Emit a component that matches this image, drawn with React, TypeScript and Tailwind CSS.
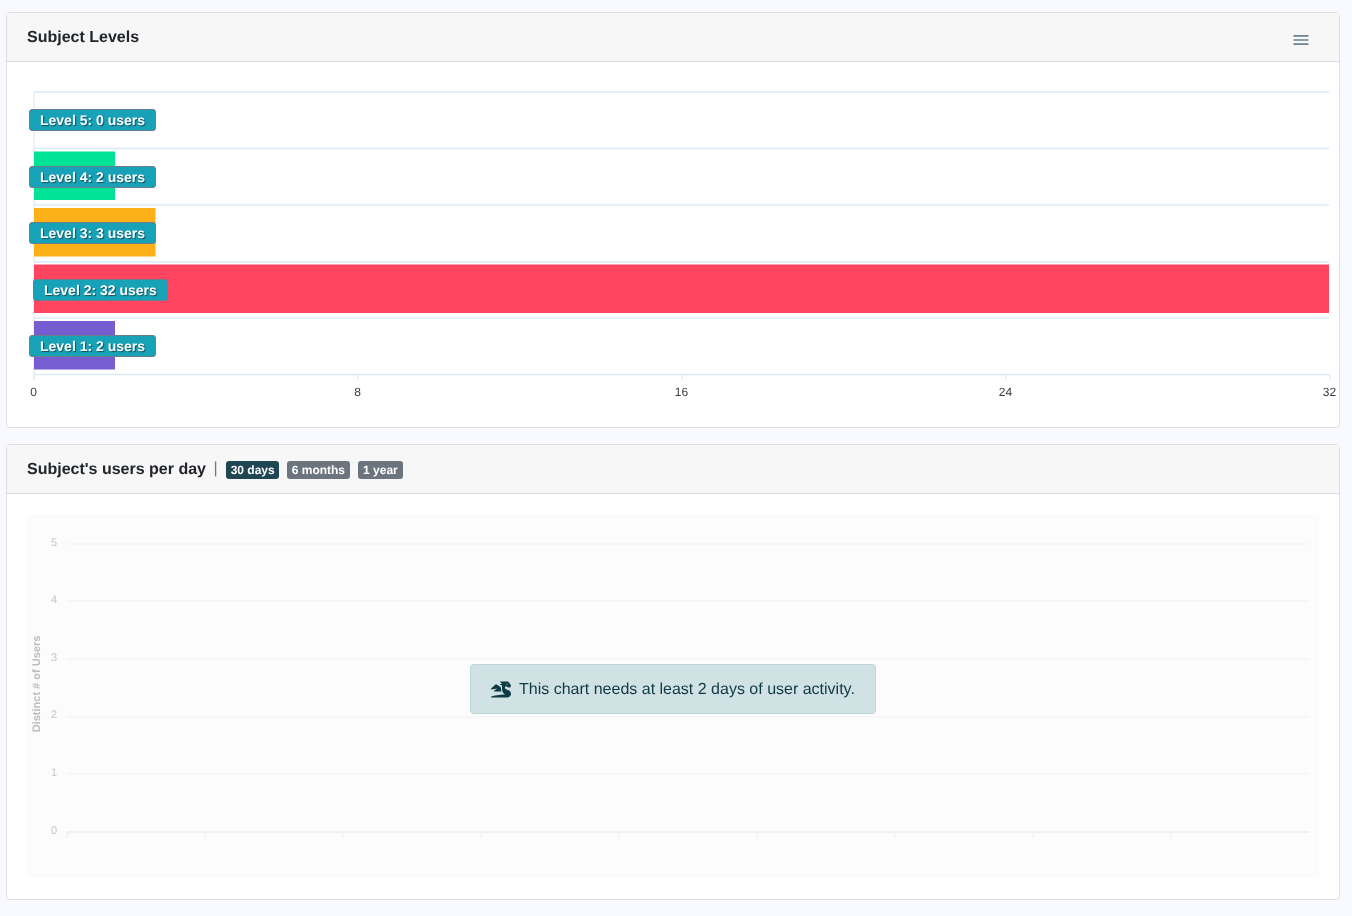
import { FaDragon } from "react-icons/fa";

const levelBars = [
  { y: 151.5, w: 81, fill: "#00e396" },
  { y: 208, w: 121.5, fill: "#feb019" },
  { y: 264.5, w: 1295, fill: "#ff4560" },
  { y: 321, w: 81, fill: "#775dd0" },
];

const levelLabels = [
  { text: "Level 5: 0 users", pos: "left-[22px] top-[47px] w-[126.5px]" },
  { text: "Level 4: 2 users", pos: "left-[22px] top-[103.5px] w-[126.5px]" },
  { text: "Level 3: 3 users", pos: "left-[22px] top-[160px] w-[126.5px]" },
  { text: "Level 2: 32 users", pos: "left-[26px] top-[217px] w-[135px]" },
  { text: "Level 1: 2 users", pos: "left-[22px] top-[273px] w-[126.5px]" },
];

const gridY = [92, 148.5, 205, 262, 318, 374.5];
const xTicks = [
  { x: 34, label: "0" },
  { x: 358, label: "8" },
  { x: 682, label: "16" },
  { x: 1006, label: "24" },
  { x: 1330, label: "32" },
];

const dayLines = [
  { y: 544, labelY: 546, label: "5" },
  { y: 601, labelY: 603, label: "4" },
  { y: 659, labelY: 661, label: "3" },
  { y: 717, labelY: 718, label: "2" },
  { y: 774, labelY: 776, label: "1" },
  { y: 832, labelY: 834, label: "0" },
];
const dayTicks = [67, 205, 343, 481, 619, 757, 895, 1033, 1171];

function LevelsChart() {
  return (
    <div className="relative h-[365px]">
      <svg width="1332" height="365" viewBox="7 62 1332 365" className="block">
        <line x1="34" y1="92" x2="34" y2="380" stroke="#ececec" strokeWidth="1.5" />
        {gridY.map((y) => (
          <line key={y} x1="34" y1={y} x2="1329" y2={y} stroke="#d9ecf4" strokeWidth="1.5" />
        ))}
        {levelBars.map((b) => (
          <rect key={b.y} x="34" y={b.y} width={b.w} height="48.5" fill={b.fill} />
        ))}
        {xTicks.map((t) => (
          <g key={t.x}>
            <line x1={t.x} y1="374" x2={t.x} y2="380" stroke="#e0e6ea" />
            <text x={t.x - 0.5} y="396" textAnchor="middle" fontSize="12" fill="#373d3f" fontFamily="Liberation Sans, sans-serif">
              {t.label}
            </text>
          </g>
        ))}
      </svg>
      {levelLabels.map((l) => (
        <span
          key={l.text}
          className={`absolute ${l.pos} h-[22px] rounded-[3px] border border-[#6b7f8a] bg-[#17a2b8] pl-[10px] text-[14px] leading-[21px] font-bold whitespace-nowrap text-white [text-shadow:1px_1px_1px_rgba(0,0,0,0.5)]`}
        >
          {l.text}
        </span>
      ))}
    </div>
  );
}

function UsersPerDayChart() {
  return (
    <div className="relative h-[364px] bg-[#fcfcfc]">
      <svg width="1292" height="364" viewBox="27 514 1292 364" className="block blur-[0.5px]">
        {dayLines.map((l) => (
          <g key={l.y}>
            <line x1="67" y1={l.y} x2="1309" y2={l.y} stroke={l.label === "0" ? "#ececec" : "#f1f1f1"} strokeWidth={l.label === "0" ? 1.5 : 1} />
            <text x="54" y={l.labelY} textAnchor="middle" fontSize="11" fill="#c4c4c4" fontFamily="Liberation Sans, sans-serif">
              {l.label}
            </text>
          </g>
        ))}
        {dayTicks.map((x) => (
          <line key={x} x1={x} y1="832" x2={x} y2="838" stroke="#ececec" />
        ))}
        <text
          x="40"
          y="684"
          textAnchor="middle"
          fontSize="11"
          fontWeight="700"
          fill="#bcbcbc"
          fontFamily="Liberation Sans, sans-serif"
          transform="rotate(-90 40 684)"
        >
          Distinct # of Users
        </text>
      </svg>
      <div className="absolute top-[150px] left-[443px] flex h-[50px] w-[406px] items-center gap-2 rounded-[4px] border border-[#bdd5d9] bg-[#d1e2e5] pl-[20px] text-[16px] text-[#0f3a44]">
        <FaDragon className="h-[17px] w-[20px]" />
        <span className="mt-[1px]">This chart needs at least 2 days of user activity.</span>
      </div>
    </div>
  );
}

export default function App() {
  return (
    <div className="flex h-[916px] flex-col gap-4 overflow-hidden bg-[#f8f9fe] pt-3 pr-3 pl-[6px] font-['Liberation_Sans',sans-serif] text-[#212529] [text-rendering:geometricPrecision]">
      <section className="h-[416px] rounded-[4px] border border-[#dfdfe1] bg-white will-change-transform">
        <header className="flex h-[49px] items-center justify-between border-b border-[#dcdcde] bg-[#f7f7f7] pr-[28px] pl-5">
          <h2 className="mt-[1px] text-[16px] font-bold">Subject Levels</h2>
          <svg width="20" height="20" viewBox="0 0 24 24" fill="#6e8192" className="mt-[5px]">
            <path d="M3 18h18v-2H3v2zm0-5h18v-2H3v2zm0-7v2h18V6H3z" />
          </svg>
        </header>
        <LevelsChart />
      </section>

      <section className="h-[456px] rounded-[4px] border border-[#dfdfe1] bg-white will-change-transform">
        <header className="flex h-[49px] items-center border-b border-[#dcdcde] bg-[#f7f7f7] pl-5">
          <h2 className="mt-[1px] text-[16px] font-bold">Subject's users per day</h2>
          <span className="mr-[8.5px] ml-[7.5px] text-[16px] text-[#777]">|</span>
          <div className="mt-[1px] flex gap-2">
            <span className="h-[18px] rounded-[3px] bg-[#1f4653] px-[4.5px] text-[12px] leading-[18px] font-bold text-white">30 days</span>
            <span className="h-[18px] rounded-[3px] bg-[#6c757d] px-[4.5px] text-[12px] leading-[18px] font-bold text-white">6 months</span>
            <span className="h-[18px] rounded-[3px] bg-[#6c757d] px-[5.5px] text-[12px] leading-[18px] font-bold text-white">1 year</span>
          </div>
        </header>
        <div className="p-5">
          <UsersPerDayChart />
        </div>
      </section>
    </div>
  );
}
